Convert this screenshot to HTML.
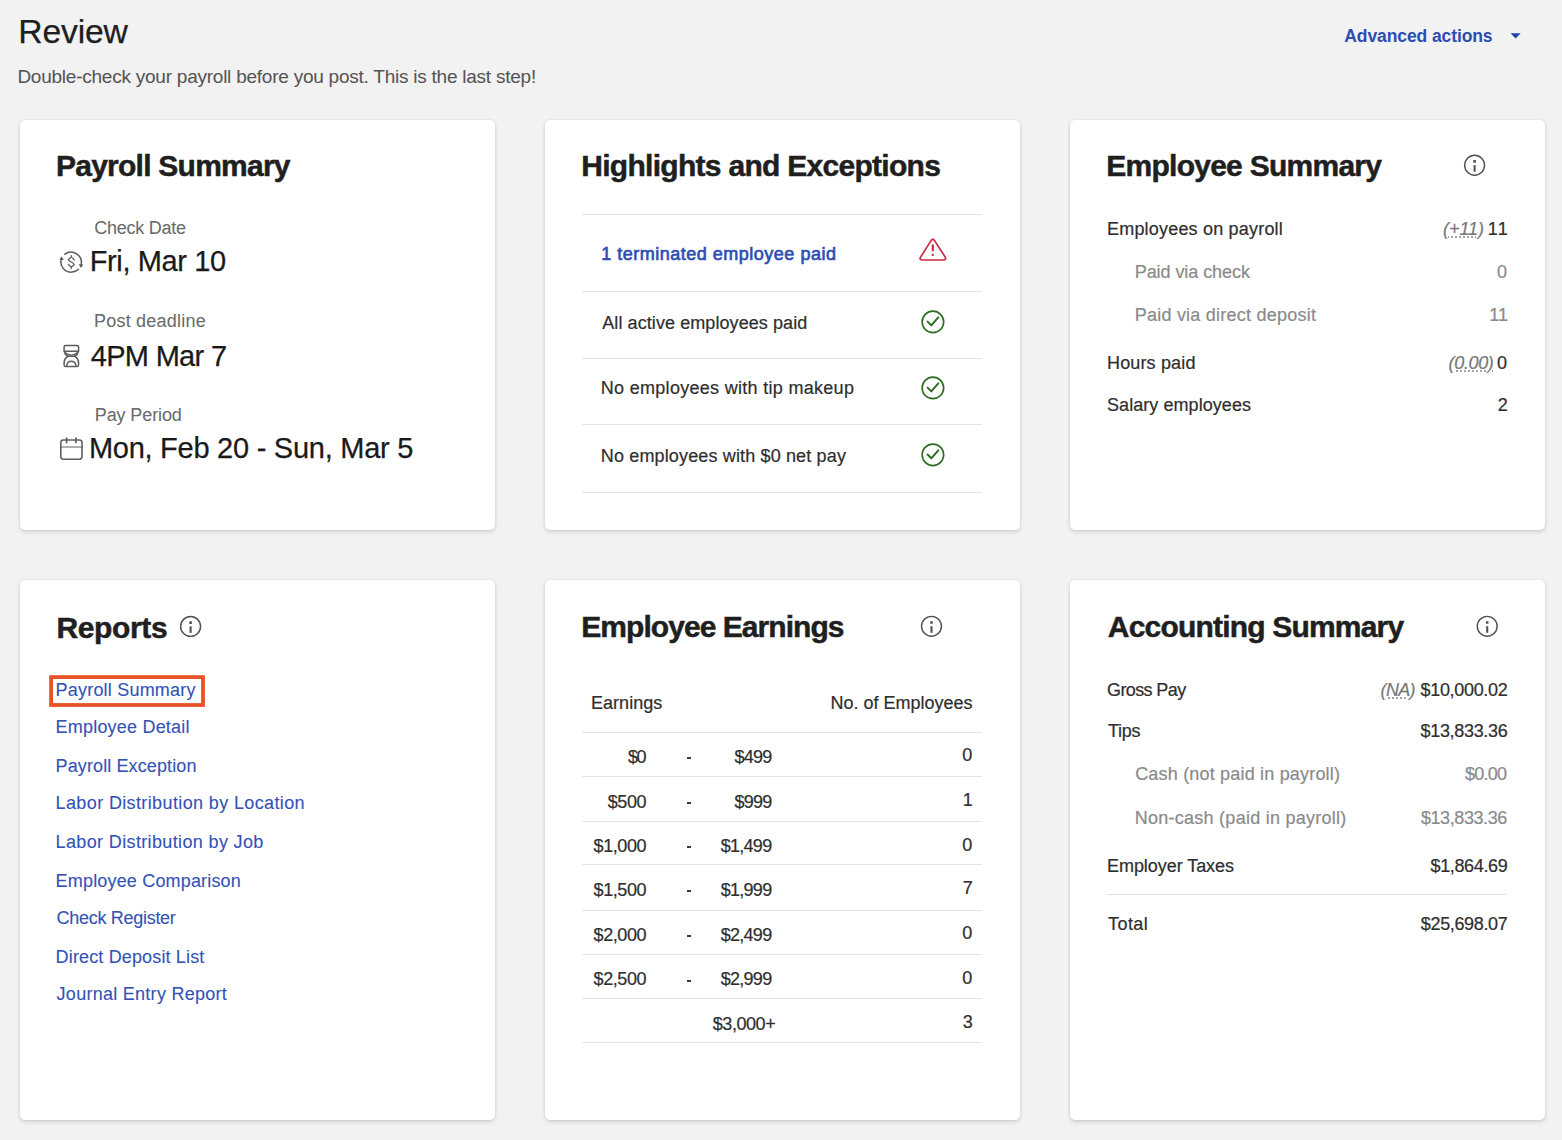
<!DOCTYPE html>
<html><head><meta charset="utf-8"><title>Review</title>
<style>
html,body{margin:0;padding:0;}
body{width:1562px;height:1140px;background:#f2f2f2;position:relative;overflow:hidden;font-family:"Liberation Sans",sans-serif;}
.t{position:absolute;white-space:nowrap;line-height:1;}
.card{position:absolute;background:#fff;border-radius:5px;box-shadow:0 2px 4px rgba(0,0,0,0.14),0 0 2px rgba(0,0,0,0.10);}
.hl{position:absolute;height:1px;}
svg{position:absolute;overflow:visible;}
</style></head><body>
<div class="card" style="left:20px;top:120px;width:475px;height:410px"></div>
<div class="card" style="left:20px;top:580px;width:475px;height:540px"></div>
<div class="card" style="left:545px;top:120px;width:475px;height:410px"></div>
<div class="card" style="left:545px;top:580px;width:475px;height:540px"></div>
<div class="card" style="left:1070px;top:120px;width:475px;height:410px"></div>
<div class="card" style="left:1070px;top:580px;width:475px;height:540px"></div>
<div class="t" id="t0" style="top:14.66px;font-size:33.7px;color:#1f1f1f;-webkit-text-stroke:0.25px #1f1f1f;letter-spacing:-0.181px;left:18.30px;">Review</div>
<div class="t" id="t1" style="top:66.71px;font-size:19px;color:#555;-webkit-text-stroke:0.05px #555;letter-spacing:-0.238px;left:17.40px;">Double-check your payroll before you post. This is the last step!</div>
<div class="t" id="t2" style="top:27.78px;font-size:17.5px;color:#2d4db3;font-weight:700;letter-spacing:-0.100px;left:1344.30px;">Advanced actions</div>
<div class="t" id="t3" style="top:151.11px;font-size:30px;color:#1f1f1f;font-weight:700;-webkit-text-stroke:0.5px #1f1f1f;letter-spacing:-0.759px;left:56.00px;">Payroll Summary</div>
<div class="t" id="t4" style="top:218.95px;font-size:18px;color:#6a6a6a;-webkit-text-stroke:0.05px #6a6a6a;letter-spacing:-0.268px;left:94.30px;">Check Date</div>
<div class="t" id="t5" style="top:247.44px;font-size:29px;color:#1a1a1a;-webkit-text-stroke:0.25px #1a1a1a;letter-spacing:-0.365px;left:89.71px;">Fri, Mar 10</div>
<div class="t" id="t6" style="top:312.35px;font-size:18px;color:#6a6a6a;-webkit-text-stroke:0.05px #6a6a6a;letter-spacing:0.218px;left:94.00px;">Post deadline</div>
<div class="t" id="t7" style="top:341.68px;font-size:29px;color:#1a1a1a;-webkit-text-stroke:0.25px #1a1a1a;letter-spacing:-0.686px;left:90.70px;">4PM Mar 7</div>
<div class="t" id="t8" style="top:405.75px;font-size:18px;color:#6a6a6a;-webkit-text-stroke:0.05px #6a6a6a;letter-spacing:-0.117px;left:94.80px;">Pay Period</div>
<div class="t" id="t9" style="top:434.06px;font-size:29px;color:#1a1a1a;-webkit-text-stroke:0.25px #1a1a1a;letter-spacing:-0.260px;left:88.90px;">Mon, Feb 20 - Sun, Mar 5</div>
<div class="t" id="t10" style="top:151.29px;font-size:30px;color:#1f1f1f;font-weight:700;-webkit-text-stroke:0.5px #1f1f1f;letter-spacing:-0.709px;left:581.24px;">Highlights and Exceptions</div>
<div class="hl" style="left:582px;top:214px;width:400px;background:#e3e3e3"></div>
<div class="hl" style="left:582px;top:291px;width:400px;background:#e3e3e3"></div>
<div class="hl" style="left:582px;top:358px;width:400px;background:#e3e3e3"></div>
<div class="hl" style="left:582px;top:424px;width:400px;background:#e3e3e3"></div>
<div class="hl" style="left:582px;top:492px;width:400px;background:#e3e3e3"></div>
<div class="t" id="t11" style="top:244.95px;font-size:18px;color:#2d4db3;-webkit-text-stroke:0.65px #2d4db3;letter-spacing:0.499px;left:601.30px;">1 terminated employee paid</div>
<div class="t" id="t12" style="top:313.75px;font-size:18px;color:#2e2e2e;-webkit-text-stroke:0.2px #2e2e2e;letter-spacing:0.079px;left:602.29px;">All active employees paid</div>
<div class="t" id="t13" style="top:378.99px;font-size:18px;color:#2e2e2e;-webkit-text-stroke:0.2px #2e2e2e;letter-spacing:0.296px;left:600.80px;">No employees with tip makeup</div>
<div class="t" id="t14" style="top:446.55px;font-size:18px;color:#2e2e2e;-webkit-text-stroke:0.2px #2e2e2e;letter-spacing:0.146px;left:600.80px;">No employees with $0 net pay</div>
<div class="t" id="t15" style="top:151.29px;font-size:30px;color:#1f1f1f;font-weight:700;-webkit-text-stroke:0.5px #1f1f1f;letter-spacing:-0.737px;left:1106.24px;">Employee Summary</div>
<div class="t" id="t16" style="top:219.75px;font-size:18px;color:#2e2e2e;-webkit-text-stroke:0.2px #2e2e2e;letter-spacing:0.195px;left:1107.00px;">Employees on payroll</div>
<div class="t" id="t17" style="top:219.75px;font-size:18px;color:#777;-webkit-text-stroke:0.2px #777;font-style:italic;letter-spacing:-0.046px;left:1443.00px;text-decoration:underline dotted #999;text-underline-offset:2px;">(+11)</div>
<div class="t" id="t18" style="top:219.75px;font-size:18px;color:#2e2e2e;-webkit-text-stroke:0.2px #2e2e2e;letter-spacing:1.260px;right:53.04px;text-align:right;">11</div>
<div class="t" id="t19" style="top:262.57px;font-size:18px;color:#8a8a8a;-webkit-text-stroke:0.2px #8a8a8a;letter-spacing:-0.066px;left:1134.71px;">Paid via check</div>
<div class="t" id="t20" style="top:262.57px;font-size:18px;color:#8a8a8a;-webkit-text-stroke:0.2px #8a8a8a;right:55.00px;text-align:right;">0</div>
<div class="t" id="t21" style="top:305.95px;font-size:18px;color:#8a8a8a;-webkit-text-stroke:0.2px #8a8a8a;letter-spacing:0.232px;left:1134.71px;">Paid via direct deposit</div>
<div class="t" id="t22" style="top:305.95px;font-size:18px;color:#8a8a8a;-webkit-text-stroke:0.2px #8a8a8a;right:54.00px;text-align:right;">11</div>
<div class="t" id="t23" style="top:353.75px;font-size:18px;color:#2e2e2e;-webkit-text-stroke:0.2px #2e2e2e;letter-spacing:0.150px;left:1107.00px;">Hours paid</div>
<div class="t" id="t24" style="top:353.75px;font-size:18px;color:#777;-webkit-text-stroke:0.2px #777;font-style:italic;letter-spacing:-0.343px;left:1448.57px;text-decoration:underline dotted #999;text-underline-offset:2px;">(0.00)</div>
<div class="t" id="t25" style="top:353.75px;font-size:18px;color:#2e2e2e;-webkit-text-stroke:0.2px #2e2e2e;right:55.00px;text-align:right;">0</div>
<div class="t" id="t26" style="top:396.15px;font-size:18px;color:#2e2e2e;-webkit-text-stroke:0.2px #2e2e2e;letter-spacing:0.062px;left:1107.00px;">Salary employees</div>
<div class="t" id="t27" style="top:396.15px;font-size:18px;color:#2e2e2e;-webkit-text-stroke:0.2px #2e2e2e;right:54.30px;text-align:right;">2</div>
<div class="t" id="t28" style="top:612.89px;font-size:30px;color:#1f1f1f;font-weight:700;-webkit-text-stroke:0.5px #1f1f1f;letter-spacing:-0.357px;left:56.40px;">Reports</div>
<div class="t" id="t29" style="top:681.35px;font-size:18px;color:#3452b6;-webkit-text-stroke:0.1px #3452b6;letter-spacing:0.200px;left:55.60px;">Payroll Summary</div>
<div class="t" id="t30" style="top:717.75px;font-size:18px;color:#3452b6;-webkit-text-stroke:0.1px #3452b6;letter-spacing:0.202px;left:55.60px;">Employee Detail</div>
<div class="t" id="t31" style="top:756.55px;font-size:18px;color:#3452b6;-webkit-text-stroke:0.1px #3452b6;letter-spacing:0.110px;left:55.60px;">Payroll Exception</div>
<div class="t" id="t32" style="top:793.95px;font-size:18px;color:#3452b6;-webkit-text-stroke:0.1px #3452b6;letter-spacing:0.374px;left:55.60px;">Labor Distribution by Location</div>
<div class="t" id="t33" style="top:832.75px;font-size:18px;color:#3452b6;-webkit-text-stroke:0.1px #3452b6;letter-spacing:0.361px;left:55.60px;">Labor Distribution by Job</div>
<div class="t" id="t34" style="top:871.75px;font-size:18px;color:#3452b6;-webkit-text-stroke:0.1px #3452b6;letter-spacing:0.174px;left:55.60px;">Employee Comparison</div>
<div class="t" id="t35" style="top:908.57px;font-size:18px;color:#3452b6;-webkit-text-stroke:0.1px #3452b6;letter-spacing:-0.296px;left:56.60px;">Check Register</div>
<div class="t" id="t36" style="top:947.57px;font-size:18px;color:#3452b6;-webkit-text-stroke:0.1px #3452b6;letter-spacing:0.147px;left:55.60px;">Direct Deposit List</div>
<div class="t" id="t37" style="top:985.35px;font-size:18px;color:#3452b6;-webkit-text-stroke:0.1px #3452b6;letter-spacing:0.270px;left:56.60px;">Journal Entry Report</div>
<div class="t" id="t38" style="top:612.11px;font-size:30px;color:#1f1f1f;font-weight:700;-webkit-text-stroke:0.5px #1f1f1f;letter-spacing:-0.946px;left:581.24px;">Employee Earnings</div>
<div class="t" id="t39" style="top:693.95px;font-size:18px;color:#2e2e2e;-webkit-text-stroke:0.2px #2e2e2e;letter-spacing:0.035px;left:591.00px;">Earnings</div>
<div class="t" id="t40" style="top:693.95px;font-size:18px;color:#2e2e2e;-webkit-text-stroke:0.2px #2e2e2e;right:589.41px;text-align:right;">No. of Employees</div>
<div class="hl" style="left:582px;top:732px;width:400px;background:#e3e3e3"></div>
<div class="hl" style="left:582px;top:776px;width:400px;background:#e3e3e3"></div>
<div class="hl" style="left:582px;top:821px;width:400px;background:#e3e3e3"></div>
<div class="hl" style="left:582px;top:864px;width:400px;background:#e3e3e3"></div>
<div class="hl" style="left:582px;top:910px;width:400px;background:#e3e3e3"></div>
<div class="hl" style="left:582px;top:954px;width:400px;background:#e3e3e3"></div>
<div class="hl" style="left:582px;top:998px;width:400px;background:#e3e3e3"></div>
<div class="hl" style="left:582px;top:1042px;width:400px;background:#e3e3e3"></div>
<div class="t" id="t41" style="top:747.75px;font-size:18px;color:#2e2e2e;-webkit-text-stroke:0.2px #2e2e2e;letter-spacing:-1.300px;right:916.69px;text-align:right;">$0</div>
<div class="hl" style="left:686.8px;top:757px;width:4.5px;height:1.5px;background:#3a3a3a"></div>
<div class="t" id="t42" style="top:747.75px;font-size:18px;color:#2e2e2e;-webkit-text-stroke:0.2px #2e2e2e;letter-spacing:-0.763px;right:790.57px;text-align:right;">$499</div>
<div class="t" id="t43" style="top:746.15px;font-size:18px;color:#2e2e2e;-webkit-text-stroke:0.2px #2e2e2e;right:589.76px;text-align:right;">0</div>
<div class="t" id="t44" style="top:792.75px;font-size:18px;color:#2e2e2e;-webkit-text-stroke:0.2px #2e2e2e;letter-spacing:-0.390px;right:915.80px;text-align:right;">$500</div>
<div class="hl" style="left:686.8px;top:802px;width:4.5px;height:1.5px;background:#3a3a3a"></div>
<div class="t" id="t45" style="top:792.75px;font-size:18px;color:#2e2e2e;-webkit-text-stroke:0.2px #2e2e2e;letter-spacing:-0.763px;right:790.57px;text-align:right;">$999</div>
<div class="t" id="t46" style="top:791.15px;font-size:18px;color:#2e2e2e;-webkit-text-stroke:0.2px #2e2e2e;right:589.20px;text-align:right;">1</div>
<div class="t" id="t47" style="top:836.75px;font-size:18px;color:#2e2e2e;-webkit-text-stroke:0.2px #2e2e2e;letter-spacing:-0.404px;right:915.81px;text-align:right;">$1,000</div>
<div class="hl" style="left:686.8px;top:846px;width:4.5px;height:1.5px;background:#3a3a3a"></div>
<div class="t" id="t48" style="top:836.75px;font-size:18px;color:#2e2e2e;-webkit-text-stroke:0.2px #2e2e2e;letter-spacing:-0.698px;right:790.51px;text-align:right;">$1,499</div>
<div class="t" id="t49" style="top:835.57px;font-size:18px;color:#2e2e2e;-webkit-text-stroke:0.2px #2e2e2e;right:589.76px;text-align:right;">0</div>
<div class="t" id="t50" style="top:880.75px;font-size:18px;color:#2e2e2e;-webkit-text-stroke:0.2px #2e2e2e;letter-spacing:-0.404px;right:915.81px;text-align:right;">$1,500</div>
<div class="hl" style="left:686.8px;top:890px;width:4.5px;height:1.5px;background:#3a3a3a"></div>
<div class="t" id="t51" style="top:880.75px;font-size:18px;color:#2e2e2e;-webkit-text-stroke:0.2px #2e2e2e;letter-spacing:-0.698px;right:790.51px;text-align:right;">$1,999</div>
<div class="t" id="t52" style="top:879.15px;font-size:18px;color:#2e2e2e;-webkit-text-stroke:0.2px #2e2e2e;right:589.20px;text-align:right;">7</div>
<div class="t" id="t53" style="top:925.75px;font-size:18px;color:#2e2e2e;-webkit-text-stroke:0.2px #2e2e2e;letter-spacing:-0.404px;right:915.81px;text-align:right;">$2,000</div>
<div class="hl" style="left:686.8px;top:935px;width:4.5px;height:1.5px;background:#3a3a3a"></div>
<div class="t" id="t54" style="top:925.75px;font-size:18px;color:#2e2e2e;-webkit-text-stroke:0.2px #2e2e2e;letter-spacing:-0.698px;right:790.51px;text-align:right;">$2,499</div>
<div class="t" id="t55" style="top:924.15px;font-size:18px;color:#2e2e2e;-webkit-text-stroke:0.2px #2e2e2e;right:589.76px;text-align:right;">0</div>
<div class="t" id="t56" style="top:969.75px;font-size:18px;color:#2e2e2e;-webkit-text-stroke:0.2px #2e2e2e;letter-spacing:-0.404px;right:915.81px;text-align:right;">$2,500</div>
<div class="hl" style="left:686.8px;top:980px;width:4.5px;height:1.5px;background:#3a3a3a"></div>
<div class="t" id="t57" style="top:969.75px;font-size:18px;color:#2e2e2e;-webkit-text-stroke:0.2px #2e2e2e;letter-spacing:-0.698px;right:790.51px;text-align:right;">$2,999</div>
<div class="t" id="t58" style="top:968.57px;font-size:18px;color:#2e2e2e;-webkit-text-stroke:0.2px #2e2e2e;right:589.76px;text-align:right;">0</div>
<div class="t" id="t59" style="top:1014.85px;font-size:18px;color:#2e2e2e;-webkit-text-stroke:0.2px #2e2e2e;letter-spacing:-0.437px;right:786.74px;text-align:right;">$3,000+</div>
<div class="t" id="t60" style="top:1012.75px;font-size:18px;color:#2e2e2e;-webkit-text-stroke:0.2px #2e2e2e;right:589.20px;text-align:right;">3</div>
<div class="t" id="t61" style="top:612.11px;font-size:30px;color:#1f1f1f;font-weight:700;-webkit-text-stroke:0.5px #1f1f1f;letter-spacing:-0.809px;left:1107.80px;">Accounting Summary</div>
<div class="t" id="t62" style="top:680.95px;font-size:18px;color:#2e2e2e;-webkit-text-stroke:0.2px #2e2e2e;letter-spacing:-0.606px;left:1107.00px;">Gross Pay</div>
<div class="t" id="t63" style="top:680.55px;font-size:18px;color:#777;-webkit-text-stroke:0.2px #777;font-style:italic;letter-spacing:-0.630px;left:1380.52px;text-decoration:underline dotted #999;text-underline-offset:2px;">(NA)</div>
<div class="t" id="t64" style="top:680.95px;font-size:18px;color:#2e2e2e;-webkit-text-stroke:0.2px #2e2e2e;letter-spacing:-0.330px;right:54.63px;text-align:right;">$10,000.02</div>
<div class="t" id="t65" style="top:721.75px;font-size:18px;color:#2e2e2e;-webkit-text-stroke:0.2px #2e2e2e;letter-spacing:-0.245px;left:1108.00px;">Tips</div>
<div class="t" id="t66" style="top:721.75px;font-size:18px;color:#2e2e2e;-webkit-text-stroke:0.2px #2e2e2e;letter-spacing:-0.330px;right:54.63px;text-align:right;">$13,833.36</div>
<div class="t" id="t67" style="top:764.95px;font-size:18px;color:#8a8a8a;-webkit-text-stroke:0.2px #8a8a8a;letter-spacing:0.187px;left:1135.20px;">Cash (not paid in payroll)</div>
<div class="t" id="t68" style="top:764.95px;font-size:18px;color:#8a8a8a;-webkit-text-stroke:0.2px #8a8a8a;letter-spacing:-0.750px;right:55.74px;text-align:right;">$0.00</div>
<div class="t" id="t69" style="top:809.35px;font-size:18px;color:#8a8a8a;-webkit-text-stroke:0.2px #8a8a8a;letter-spacing:0.262px;left:1134.71px;">Non-cash (paid in payroll)</div>
<div class="t" id="t70" style="top:809.35px;font-size:18px;color:#8a8a8a;-webkit-text-stroke:0.2px #8a8a8a;letter-spacing:-0.408px;right:55.11px;text-align:right;">$13,833.36</div>
<div class="t" id="t71" style="top:856.95px;font-size:18px;color:#2e2e2e;-webkit-text-stroke:0.2px #2e2e2e;letter-spacing:-0.056px;left:1107.00px;">Employer Taxes</div>
<div class="t" id="t72" style="top:856.95px;font-size:18px;color:#2e2e2e;-webkit-text-stroke:0.2px #2e2e2e;letter-spacing:-0.365px;right:54.67px;text-align:right;">$1,864.69</div>
<div class="hl" style="left:1107px;top:894px;width:400px;background:#e3e3e3"></div>
<div class="t" id="t73" style="top:914.95px;font-size:18px;color:#2e2e2e;-webkit-text-stroke:0.2px #2e2e2e;letter-spacing:0.446px;left:1108.00px;">Total</div>
<div class="t" id="t74" style="top:914.95px;font-size:18px;color:#2e2e2e;-webkit-text-stroke:0.2px #2e2e2e;letter-spacing:-0.361px;right:54.66px;text-align:right;">$25,698.07</div>
<svg width="1562" height="1140" viewBox="0 0 1562 1140" style="left:0;top:0;position:absolute;pointer-events:none">
<!-- caret -->
<path d="M1510.6,33.2 L1520.6,33.2 L1515.6,38.4 Z" fill="#1f42aa"/>
<!-- check date icon: circular arrows with $ -->
<g fill="none" stroke="#5c5c5c" stroke-width="1.5" stroke-linecap="round">
<path d="M64.9,254.2 A10.3,10.3 0 0 1 80.9,265.4"/>
<path d="M78.4,269.2 A10.3,10.3 0 0 1 61.5,258.3"/>
<path d="M71.3,255.7 L71.3,257.3 M74.2,259.9 Q72.6,257.4 71.3,257.4 Q69.8,257.4 68.4,259.6 Q69.2,261.2 71.3,262 Q73.5,262.9 74.2,264.4 Q72.8,266.7 71.3,266.7 Q69.9,266.7 68.4,264.4 M71.3,266.7 L71.3,268.4" stroke-width="1.3" stroke-linejoin="round"/>
</g>
<path d="M59.4,259.8 L61.6,256.4 L63.8,260.0 Z" fill="#5c5c5c"/>
<path d="M78.7,264.2 L83.3,264.6 L81.0,268.0 Z" fill="#5c5c5c"/>
<!-- hourglass -->
<g fill="none" stroke="#5c5c5c" stroke-width="1.5" stroke-linejoin="round" stroke-linecap="round">
<path d="M64.1,351.3 L64.1,347 Q64.1,345.6 65.8,345.6 L76.9,345.6 Q78.6,345.6 78.6,347 L78.6,351.3 Z"/>
<path d="M64.3,351.5 C64.8,354 66.6,355.6 68.2,356.3 L74.4,356.3 C76,355.6 77.8,354 78.3,351.5"/>
<path d="M68.2,356.3 C65.5,357.5 64.1,360 64.1,363.5 L64.1,365 Q64.1,366.6 65.8,366.6 L76.9,366.6 Q78.6,366.6 78.6,365 L78.6,363.5 C78.6,360 77.1,357.5 74.4,356.3"/>
<path d="M65.9,352.9 Q71.3,357.4 76.7,352.9" stroke-width="1.3"/>
<path d="M66.5,366.1 Q67.3,361.3 71.3,361.3 Q75.3,361.3 76.1,366.1" stroke-width="1.4"/>
</g>
<!-- calendar -->
<g fill="none" stroke="#5f5f5f" stroke-linecap="round">
<rect x="60.8" y="440" width="21.2" height="19.2" rx="2.6" stroke-width="1.6"/>
<path d="M61.2,447 L81.6,447" stroke-width="1.2" stroke="#606060"/>
<path d="M66.6,438.2 L66.6,442.6 M75.9,438.2 L75.9,442.6" stroke-width="1.7"/>
</g>
<!-- warning -->
<g fill="none" stroke="#c92a44" stroke-linejoin="round" stroke-linecap="round">
<path d="M931.2,240.4 Q932.8,238.2 934.4,240.4 L945.4,257.4 Q946.4,259.9 943.6,260 L922.2,260 Q919.4,259.9 920.4,257.4 Z" stroke-width="1.7"/>
<path d="M932.8,245.2 L932.8,250.4" stroke-width="2.1"/>
<path d="M932.8,254.8 L932.8,255.1" stroke-width="2.3"/>
</g>
<!-- checks -->
<g fill="none" stroke="#2f6d22" stroke-linecap="round" stroke-linejoin="round">
<circle cx="932.9" cy="321.9" r="10.75" stroke-width="1.65"/>
<path d="M927.6,321.6 L931.3,325.4 L938.3,317.4" stroke-width="2"/>
<circle cx="932.9" cy="387.9" r="10.75" stroke-width="1.65"/>
<path d="M927.6,387.6 L931.3,391.4 L938.3,383.4" stroke-width="2"/>
<circle cx="932.9" cy="454.8" r="10.75" stroke-width="1.65"/>
<path d="M927.6,454.5 L931.3,458.3 L938.3,450.3" stroke-width="2"/>
</g>
<!-- info icons -->
<g fill="none" stroke="#505050">
<circle cx="1474.6" cy="165.2" r="9.95" stroke-width="1.45"/>
<circle cx="190.6" cy="626.4" r="9.95" stroke-width="1.45"/>
<circle cx="931.5" cy="626.3" r="9.95" stroke-width="1.45"/>
<circle cx="1487.2" cy="626.3" r="9.95" stroke-width="1.45"/>
</g>
<g fill="#505050">
<rect x="1473.3" y="160.1" width="2.6" height="2.6" rx="0.5"/><rect x="1473.55" y="165.1" width="2.1" height="6.6"/>
<rect x="189.3" y="621.3" width="2.6" height="2.6" rx="0.5"/><rect x="189.55" y="626.3" width="2.1" height="6.6"/>
<rect x="930.2" y="621.2" width="2.6" height="2.6" rx="0.5"/><rect x="930.45" y="626.2" width="2.1" height="6.6"/>
<rect x="1485.9" y="621.2" width="2.6" height="2.6" rx="0.5"/><rect x="1486.15" y="626.2" width="2.1" height="6.6"/>
</g>
<!-- orange highlight -->
<rect x="51.1" y="677.1" width="151.9" height="27.9" fill="none" stroke="#e85326" stroke-width="3.8"/>
</svg>

</body></html>
